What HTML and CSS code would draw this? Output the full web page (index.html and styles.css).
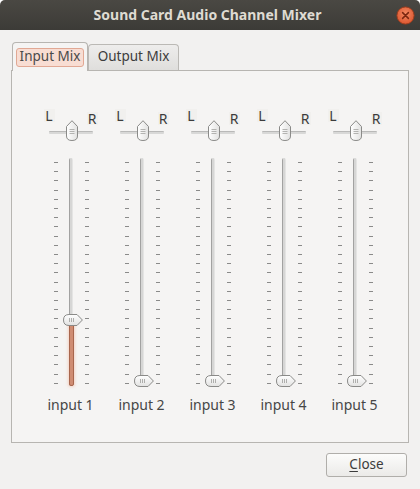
FILE: index.html
```html
<!DOCTYPE html>
<html>
<head>
<meta charset="utf-8">
<link rel="stylesheet" href="styles.css">
</head>
<body>
<div class="window">
  <header class="titlebar">
    <span></span>
    <h1 class="title">Sound Card Audio Channel Mixer</h1>
    <button class="wclose" aria-label="Close window">
      <svg width="19" height="19" viewBox="0 0 19 19">
        <defs>
          <radialGradient id="cg" cx="50%" cy="40%" r="60%">
            <stop offset="0" stop-color="#f28a62"/>
            <stop offset="1" stop-color="#db5630"/>
          </radialGradient>
        </defs>
        <circle cx="9.5" cy="9.5" r="8.6" fill="url(#cg)" stroke="#9e3c1c" stroke-width="0.9"/>
        <path d="M6.6 6.6 L12.4 12.4 M12.4 6.6 L6.6 12.4" stroke="#7a2710" stroke-width="1.5" stroke-linecap="round"/>
      </svg>
    </button>
  </header>
  <main class="content">
    <div class="notebook">
      <div class="tabs">
        <div class="tab active"><span class="focus">Input Mix</span></div>
        <div class="tab inactive">Output Mix</div>
      </div>
      <div class="panel">
        <div class="ch">
          <div class="pan">
            <div class="lr"><span class="l">L</span><span class="r">R</span></div>
            <div class="ptrack"><div class="pline"></div>
              <svg class="pthumb" viewBox="0 0 12 21"><defs><linearGradient id="pg1" x1="0" y1="0" x2="1" y2="0"><stop offset="0" stop-color="#ffffff"/><stop offset="1" stop-color="#e2e2e1"/></linearGradient></defs><path d="M0.5 6.5 L6 0.7 L11.5 6.5 V16 Q11.5 20.5 6 20.5 Q0.5 20.5 0.5 16 Z" fill="url(#pg1)" stroke="#8a8a88"/><path d="M3.5 9.5 H8.5 M3.5 11.5 H8.5 M3.5 13.5 H8.5" stroke="#a3a3a1" stroke-width="0.8"/></svg>
            </div>
          </div>
          <div class="vs">
            <div class="ticks"><i></i><i></i><i></i><i></i><i></i><i></i><i></i><i></i><i></i><i></i><i></i><i></i><i></i><i></i><i></i><i></i><i></i><i></i><i></i><i></i><i></i><i></i><i></i><i></i><i></i></div>
            <div class="trough">
              <div class="fill" style="height:66px"></div>
              <svg class="vthumb" style="top:156px" viewBox="0 0 20 12"><defs><linearGradient id="vg1" x1="0" y1="0" x2="0" y2="1"><stop offset="0" stop-color="#ffffff"/><stop offset="1" stop-color="#e2e2e1"/></linearGradient></defs><path d="M6 0.5 H14 L19.4 6 L14 11.5 H6 Q0.5 11.5 0.5 6 Q0.5 0.5 6 0.5 Z" fill="url(#vg1)" stroke="#8a8a88"/><path d="M6.5 4 V8 M8.5 4 V8 M10.5 4 V8" stroke="#9d9d9b" stroke-width="0.8"/></svg>
            </div>
            <div class="ticks"><i></i><i></i><i></i><i></i><i></i><i></i><i></i><i></i><i></i><i></i><i></i><i></i><i></i><i></i><i></i><i></i><i></i><i></i><i></i><i></i><i></i><i></i><i></i><i></i><i></i></div>
          </div>
          <div class="name">input 1</div>
        </div>

        <div class="ch">
          <div class="pan">
            <div class="lr"><span class="l">L</span><span class="r">R</span></div>
            <div class="ptrack"><div class="pline"></div>
              <svg class="pthumb" viewBox="0 0 12 21"><path d="M0.5 6.5 L6 0.7 L11.5 6.5 V16 Q11.5 20.5 6 20.5 Q0.5 20.5 0.5 16 Z" fill="url(#pg1)" stroke="#8a8a88"/><path d="M3.5 9.5 H8.5 M3.5 11.5 H8.5 M3.5 13.5 H8.5" stroke="#a3a3a1" stroke-width="0.8"/></svg>
            </div>
          </div>
          <div class="vs">
            <div class="ticks"><i></i><i></i><i></i><i></i><i></i><i></i><i></i><i></i><i></i><i></i><i></i><i></i><i></i><i></i><i></i><i></i><i></i><i></i><i></i><i></i><i></i><i></i><i></i><i></i><i></i></div>
            <div class="trough">
              <svg class="vthumb" style="top:217px" viewBox="0 0 20 12"><path d="M6 0.5 H14 L19.4 6 L14 11.5 H6 Q0.5 11.5 0.5 6 Q0.5 0.5 6 0.5 Z" fill="url(#vg1)" stroke="#8a8a88"/><path d="M6.5 4 V8 M8.5 4 V8 M10.5 4 V8" stroke="#9d9d9b" stroke-width="0.8"/></svg>
            </div>
            <div class="ticks"><i></i><i></i><i></i><i></i><i></i><i></i><i></i><i></i><i></i><i></i><i></i><i></i><i></i><i></i><i></i><i></i><i></i><i></i><i></i><i></i><i></i><i></i><i></i><i></i><i></i></div>
          </div>
          <div class="name">input 2</div>
        </div>

        <div class="ch">
          <div class="pan">
            <div class="lr"><span class="l">L</span><span class="r">R</span></div>
            <div class="ptrack"><div class="pline"></div>
              <svg class="pthumb" viewBox="0 0 12 21"><path d="M0.5 6.5 L6 0.7 L11.5 6.5 V16 Q11.5 20.5 6 20.5 Q0.5 20.5 0.5 16 Z" fill="url(#pg1)" stroke="#8a8a88"/><path d="M3.5 9.5 H8.5 M3.5 11.5 H8.5 M3.5 13.5 H8.5" stroke="#a3a3a1" stroke-width="0.8"/></svg>
            </div>
          </div>
          <div class="vs">
            <div class="ticks"><i></i><i></i><i></i><i></i><i></i><i></i><i></i><i></i><i></i><i></i><i></i><i></i><i></i><i></i><i></i><i></i><i></i><i></i><i></i><i></i><i></i><i></i><i></i><i></i><i></i></div>
            <div class="trough">
              <svg class="vthumb" style="top:217px" viewBox="0 0 20 12"><path d="M6 0.5 H14 L19.4 6 L14 11.5 H6 Q0.5 11.5 0.5 6 Q0.5 0.5 6 0.5 Z" fill="url(#vg1)" stroke="#8a8a88"/><path d="M6.5 4 V8 M8.5 4 V8 M10.5 4 V8" stroke="#9d9d9b" stroke-width="0.8"/></svg>
            </div>
            <div class="ticks"><i></i><i></i><i></i><i></i><i></i><i></i><i></i><i></i><i></i><i></i><i></i><i></i><i></i><i></i><i></i><i></i><i></i><i></i><i></i><i></i><i></i><i></i><i></i><i></i><i></i></div>
          </div>
          <div class="name">input 3</div>
        </div>

        <div class="ch">
          <div class="pan">
            <div class="lr"><span class="l">L</span><span class="r">R</span></div>
            <div class="ptrack"><div class="pline"></div>
              <svg class="pthumb" viewBox="0 0 12 21"><path d="M0.5 6.5 L6 0.7 L11.5 6.5 V16 Q11.5 20.5 6 20.5 Q0.5 20.5 0.5 16 Z" fill="url(#pg1)" stroke="#8a8a88"/><path d="M3.5 9.5 H8.5 M3.5 11.5 H8.5 M3.5 13.5 H8.5" stroke="#a3a3a1" stroke-width="0.8"/></svg>
            </div>
          </div>
          <div class="vs">
            <div class="ticks"><i></i><i></i><i></i><i></i><i></i><i></i><i></i><i></i><i></i><i></i><i></i><i></i><i></i><i></i><i></i><i></i><i></i><i></i><i></i><i></i><i></i><i></i><i></i><i></i><i></i></div>
            <div class="trough">
              <svg class="vthumb" style="top:217px" viewBox="0 0 20 12"><path d="M6 0.5 H14 L19.4 6 L14 11.5 H6 Q0.5 11.5 0.5 6 Q0.5 0.5 6 0.5 Z" fill="url(#vg1)" stroke="#8a8a88"/><path d="M6.5 4 V8 M8.5 4 V8 M10.5 4 V8" stroke="#9d9d9b" stroke-width="0.8"/></svg>
            </div>
            <div class="ticks"><i></i><i></i><i></i><i></i><i></i><i></i><i></i><i></i><i></i><i></i><i></i><i></i><i></i><i></i><i></i><i></i><i></i><i></i><i></i><i></i><i></i><i></i><i></i><i></i><i></i></div>
          </div>
          <div class="name">input 4</div>
        </div>

        <div class="ch">
          <div class="pan">
            <div class="lr"><span class="l">L</span><span class="r">R</span></div>
            <div class="ptrack"><div class="pline"></div>
              <svg class="pthumb" viewBox="0 0 12 21"><path d="M0.5 6.5 L6 0.7 L11.5 6.5 V16 Q11.5 20.5 6 20.5 Q0.5 20.5 0.5 16 Z" fill="url(#pg1)" stroke="#8a8a88"/><path d="M3.5 9.5 H8.5 M3.5 11.5 H8.5 M3.5 13.5 H8.5" stroke="#a3a3a1" stroke-width="0.8"/></svg>
            </div>
          </div>
          <div class="vs">
            <div class="ticks"><i></i><i></i><i></i><i></i><i></i><i></i><i></i><i></i><i></i><i></i><i></i><i></i><i></i><i></i><i></i><i></i><i></i><i></i><i></i><i></i><i></i><i></i><i></i><i></i><i></i></div>
            <div class="trough">
              <svg class="vthumb" style="top:217px" viewBox="0 0 20 12"><path d="M6 0.5 H14 L19.4 6 L14 11.5 H6 Q0.5 11.5 0.5 6 Q0.5 0.5 6 0.5 Z" fill="url(#vg1)" stroke="#8a8a88"/><path d="M6.5 4 V8 M8.5 4 V8 M10.5 4 V8" stroke="#9d9d9b" stroke-width="0.8"/></svg>
            </div>
            <div class="ticks"><i></i><i></i><i></i><i></i><i></i><i></i><i></i><i></i><i></i><i></i><i></i><i></i><i></i><i></i><i></i><i></i><i></i><i></i><i></i><i></i><i></i><i></i><i></i><i></i><i></i></div>
          </div>
          <div class="name">input 5</div>
        </div>
      </div>
    </div>
    <div class="actions">
      <button class="btn"><u>C</u>lose</button>
    </div>
  </main>
</div>
</body>
</html>
```

FILE: styles.css
```css
* { box-sizing: border-box; }
html, body { margin: 0; padding: 0; background: #ffffff; }
body {
  width: 420px;
  height: 489px;
  overflow: hidden;
  font-family: "Noto Sans", "Open Sans", sans-serif;
  font-size: 13.5px;
  color: #3c3c3c;
}
.window {
  width: 420px;
  height: 489px;
  background: #f2f1f0;
  border-radius: 5px 5px 0 0;
  overflow: hidden;
}
.titlebar {
  height: 30px;
  display: grid;
  grid-template-columns: 1fr auto 1fr;
  align-items: center;
  padding-right: 5px;
  background: linear-gradient(#4a4843, #3c3b37);
}
.title {
  margin: 0;
  font-size: 14px;
  font-weight: bold;
  line-height: 30px;
  color: #dfdbd2;
  white-space: nowrap;
}
.wclose {
  justify-self: end;
  width: 19px;
  height: 19px;
  padding: 0;
  border: 0;
  background: none;
  display: block;
}
.wclose svg { display: block; }

.content { padding: 12px 11px 0 11px; }

.tabs {
  display: flex;
  align-items: flex-end;
  height: 28px;
  padding-left: 1px;
}
.tab {
  border: 1px solid #b7b5b1;
  border-bottom: 0;
  border-radius: 4px 4px 0 0;
  line-height: 15px;
  white-space: nowrap;
}
.tab.active {
  position: relative;
  z-index: 1;
  width: 76px;
  height: 29px;
  margin-bottom: -1px;
  padding: 5px 3px 0;
  background: #f5f4f3;
}
.focus {
  display: block;
  width: 68px;
  height: 19px;
  border: 1px solid #e1a894;
  border-radius: 3px;
  background: #f8ddd3;
  text-align: center;
  line-height: 15px;
  color: #4a4a4a;
}
.tab.inactive {
  width: 91px;
  height: 26px;
  padding-top: 4px;
  text-align: center;
  background: linear-gradient(#eeedec, #dfdedc);
  border-color: #bbb9b5;
}

.panel {
  height: 373px;
  border: 1px solid #b7b5b1;
  background: #f5f4f3;
  display: flex;
  padding-left: 23px;
}
.ch {
  width: 71px;
  display: flex;
  flex-direction: column;
  align-items: center;
  padding-top: 38px;
}
.pan { width: 54px; }
.lr {
  display: flex;
  justify-content: space-between;
  align-items: flex-start;
  height: 16px;
  font-size: 14px;
  line-height: 13px;
  color: #3c3c3c;
}
.lr span {
  width: 11px;
  height: 13px;
  text-align: center;
  background: #f1f0ee;
}
.lr .r { margin-top: 3px; }
.ptrack {
  position: relative;
  height: 21px;
  margin-top: -5px;
  padding-top: 11px;
}
.pline {
  height: 3px;
  margin: 0 5px;
  border-radius: 1px;
  background: linear-gradient(#b9b9b8 0 1px, #d8d8d7 1px);
}
.pthumb {
  position: absolute;
  left: 22px;
  top: 0;
  width: 12px;
  height: 21px;
}

.vs {
  display: flex;
  height: 228px;
  margin-top: 17px;
  margin-left: 2px;
}
.ticks {
  width: 4px;
  display: flex;
  flex-direction: column;
  justify-content: space-between;
  padding: 4px 0 2px;
}
.ticks i {
  display: block;
  height: 1px;
  background: #8a8a89;
}
.trough {
  position: relative;
  width: 4px;
  margin: 0 12px 0 11px;
  border-radius: 2px;
  background: linear-gradient(to right, #a2a2a1 0 1px, #d6d6d5 1px 3px, #e4e4e3 3px);
}
.fill {
  position: absolute;
  left: 0;
  bottom: 0;
  width: 5px;
  border: 1px solid #a8664d;
  border-radius: 2px;
  background: #cf8c72;
  box-shadow: 0 0 3px 1px rgba(242, 150, 112, 0.35);
}
.vthumb {
  position: absolute;
  left: -6px;
  width: 20px;
  height: 12px;
}
.name {
  margin-top: 12px;
  font-size: 14px;
  line-height: 14px;
  color: #464646;
  white-space: nowrap;
}

.actions {
  display: flex;
  justify-content: flex-end;
  padding: 10px 2px 0 0;
}
.btn {
  width: 81px;
  height: 24px;
  padding: 0 0 2px;
  border: 1px solid #b0aeaa;
  border-radius: 3px;
  background: linear-gradient(#fcfcfb, #ebeae8);
  font: inherit;
  font-size: 13.5px;
  line-height: 20px;
  color: #3c3c3c;
}
.btn u { text-underline-offset: 2px; }
```
